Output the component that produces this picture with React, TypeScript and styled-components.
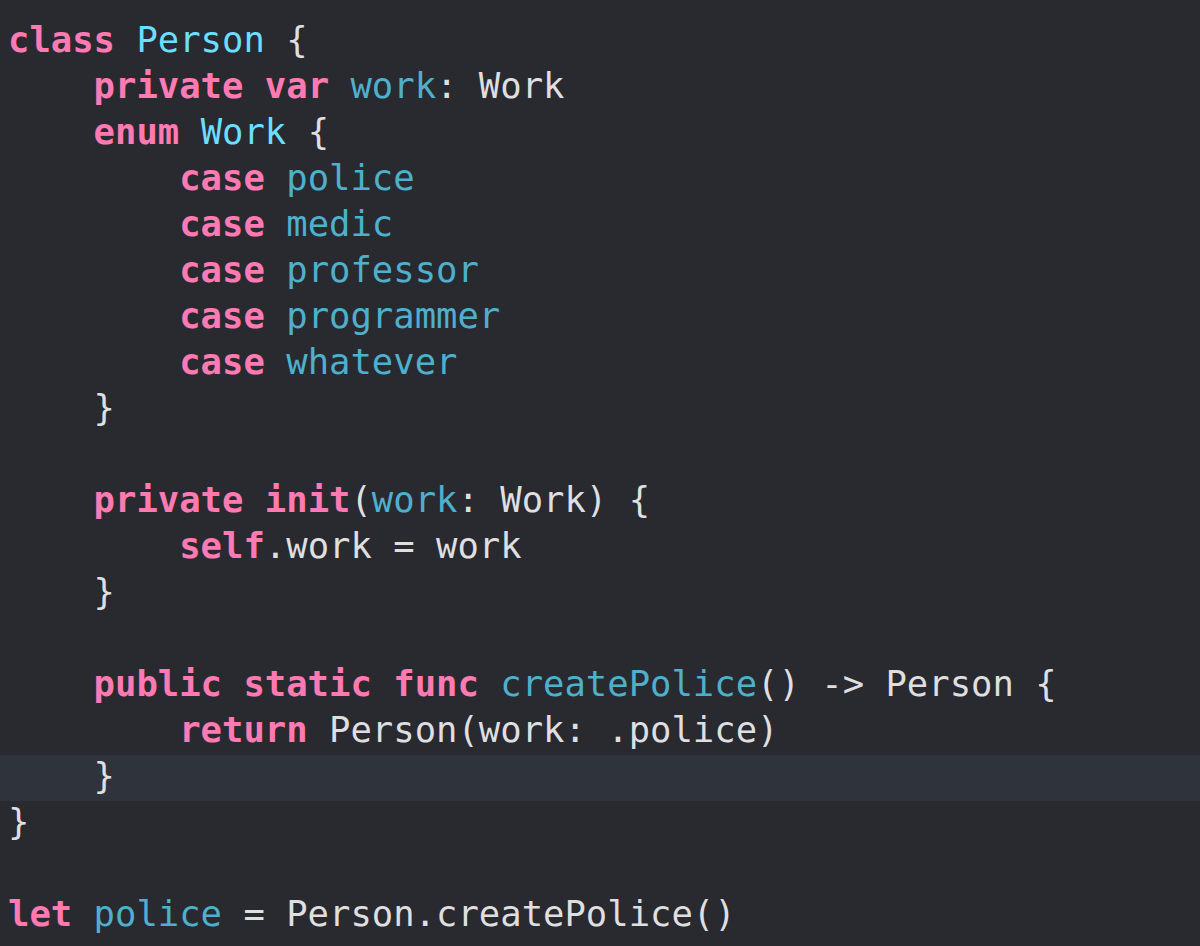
import React from "react";
import styled, { createGlobalStyle } from "styled-components";

const Global = createGlobalStyle`
  html, body { margin: 0; padding: 0; background: #292a30; }
  body { width: 1200px; height: 946px; overflow: hidden; }
`;

type Kind = "kw" | "type" | "decl" | "plain";
type Tok = [Kind, string];

const Editor = styled.div`
  width: 1200px;
  height: 946px;
  box-sizing: border-box;
  padding-top: 19px;
  background: #292a30;
  display: flex;
  flex-direction: column;
  font-family: "DejaVu Sans Mono", "Liberation Mono", monospace;
  font-size: 35.55px;
  overflow: hidden;
`;

const Line = styled.div<{ $active?: boolean }>`
  height: 46px;
  line-height: 42px;
  padding-left: 8px;
  white-space: pre;
  color: #dfdfe0;
  background: ${(p) => (p.$active ? "#2f333b" : "transparent")};
`;

const colors: Record<Kind, string> = {
  kw: "#ff7ab2",
  type: "#6bdfff",
  decl: "#4eb0cc",
  plain: "#dfdfe0",
};

const Token = styled.span<{ $kind: Kind }>`
  color: ${(p) => colors[p.$kind]};
  font-weight: ${(p) => (p.$kind === "kw" ? 700 : 400)};
`;

const k = (s: string): Tok => ["kw", s];
const t = (s: string): Tok => ["type", s];
const d = (s: string): Tok => ["decl", s];
const p = (s: string): Tok => ["plain", s];

const lines: Tok[][] = [
  [k("class"), p(" "), t("Person"), p(" {")],
  [p("    "), k("private"), p(" "), k("var"), p(" "), d("work"), p(": Work")],
  [p("    "), k("enum"), p(" "), t("Work"), p(" {")],
  [p("        "), k("case"), p(" "), d("police")],
  [p("        "), k("case"), p(" "), d("medic")],
  [p("        "), k("case"), p(" "), d("professor")],
  [p("        "), k("case"), p(" "), d("programmer")],
  [p("        "), k("case"), p(" "), d("whatever")],
  [p("    }")],
  [],
  [p("    "), k("private"), p(" "), k("init"), p("("), d("work"), p(": Work) {")],
  [p("        "), k("self"), p(".work = work")],
  [p("    }")],
  [],
  [p("    "), k("public"), p(" "), k("static"), p(" "), k("func"), p(" "), d("createPolice"), p("() -> Person {")],
  [p("        "), k("return"), p(" Person(work: .police)")],
  [p("    }")],
  [p("}")],
  [],
  [k("let"), p(" "), d("police"), p(" = Person.createPolice()")],
];

export default function App() {
  return (
    <>
      <Global />
      <Editor>
        {lines.map((toks, i) => (
          <Line key={i} $active={i === 16}>
            {toks.length === 0 ? " " : toks.map(([kind, s], j) => (
              <Token key={j} $kind={kind}>{s}</Token>
            ))}
          </Line>
        ))}
      </Editor>
    </>
  );
}
